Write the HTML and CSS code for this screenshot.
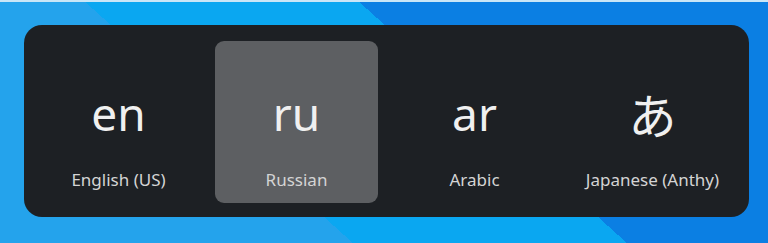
FILE: index.html
```html
<!DOCTYPE html>
<html lang="en">
<head>
<meta charset="UTF-8" />
<title>Input source switcher</title>
<link rel="stylesheet" href="styles.css">
</head>
<body>

<div class="switcher">
  <div class="source">
    <div class="code">en</div>
    <div class="name">English (US)</div>
  </div>
  <div class="source selected">
    <div class="code">ru</div>
    <div class="name">Russian</div>
  </div>
  <div class="source">
    <div class="code">ar</div>
    <div class="name">Arabic</div>
  </div>
  <div class="source">
    <div class="code jp">あ</div>
    <div class="name">Japanese (Anthy)</div>
  </div>
</div>

</body>
</html>
```

FILE: styles.css
```css
html, body {
  height: 100%;
}
body {
  margin: 0;
  padding: 25px 19px 0 24px;
  box-sizing: border-box;
  overflow: hidden;
  font-family: "Noto Sans", "Open Sans", sans-serif;
  background:
    linear-gradient(180deg, #c9e6f7 0, #c9e6f7 2px, transparent 2px),
    linear-gradient(42deg, transparent 60.4%, #0b7fe3 60.4%),
    linear-gradient(42deg, #24a3ec 0, #24a3ec 34%, #0aa7f1 34%, #0aa7f1 100%);
}

.switcher {
  display: flex;
  gap: 15px;
  width: 725px;
  height: 192px;
  box-sizing: border-box;
  padding: 16px 15px 14px 13px;
  background: #1d2024;
  border-radius: 18px;
}

.source {
  width: 163px;
  display: flex;
  flex-direction: column;
  align-items: center;
  border-radius: 9px;
  color: #f0f0f0;
}
.source.selected {
  background: #5d5f62;
}

.code {
  margin-top: 47px;
  height: 50px;
  line-height: 50px;
  font-size: 46px;
}
.code.jp {
  font-family: "Noto Sans CJK JP", sans-serif;
  font-size: 48px;
}

.name {
  margin-top: 31px;
  font-size: 17px;
  line-height: 22px;
  color: #d4d4d4;
}
```
